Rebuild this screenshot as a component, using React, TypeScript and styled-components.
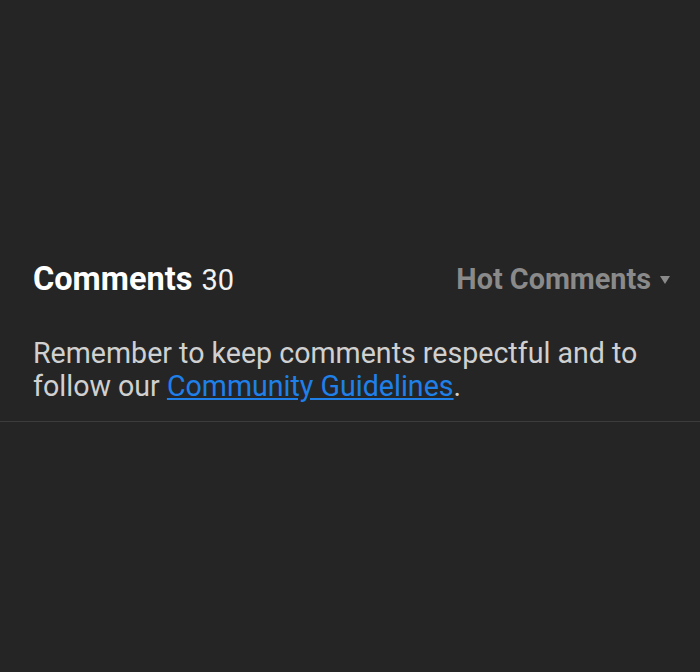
import React from "react";
import styled, { createGlobalStyle } from "styled-components";

const Global = createGlobalStyle`
  html, body { margin: 0; padding: 0; background: #252525; }
  body { font-family: Roboto, "Noto Sans", sans-serif; }
`;

const Page = styled.div`
  width: 700px;
  height: 672px;
  background: #252525;
  display: flex;
  flex-direction: column;
  overflow: hidden;
`;

const Spacer = styled.div`
  height: 257px;
  flex: none;
`;

const Header = styled.div`
  display: flex;
  align-items: center;
  justify-content: space-between;
  padding: 0 30px 0 33px;
  height: 44px;
`;

const Title = styled.h2`
  margin: 0;
  font-size: 32.5px;
  font-weight: 700;
  color: #ffffff;
  white-space: nowrap;
`;

const Count = styled.span`
  font-weight: 400;
  margin-left: 9px;
  font-size: 29px;
  color: #f2f2f2;
`;

const Sort = styled.button`
  background: none;
  border: none;
  padding: 0;
  display: flex;
  align-items: center;
  gap: 9px;
  font-family: Roboto, sans-serif;
  font-size: 28.8px;
  font-weight: 700;
  color: #8a8a8a;
  white-space: nowrap;
`;

const Caret = styled.span`
  width: 0;
  height: 0;
  border-left: 5px solid transparent;
  border-right: 5px solid transparent;
  border-top: 8px solid #8a8a8a;
  margin-top: 2px;
`;

const Notice = styled.p`
  margin: 0;
  padding: 36px 33px 18px;
  font-size: 28.6px;
  line-height: 33px;
  color: #d0d0d0;
`;

const Link = styled.a`
  color: #1f80ea;
  text-decoration: underline;
  text-underline-offset: 2px;
`;

const Divider = styled.hr`
  margin: 0;
  border: none;
  height: 1px;
  background: #3c3c3c;
`;

export default function App() {
  return (
    <>
      <Global />
      <Page>
        <Spacer />
        <Header>
          <Title>
            Comments<Count>30</Count>
          </Title>
          <Sort>
            Hot Comments<Caret />
          </Sort>
        </Header>
        <Notice>
          Remember to keep comments respectful and to follow our{" "}
          <Link href="#">Community Guidelines</Link>.
        </Notice>
        <Divider />
      </Page>
    </>
  );
}
